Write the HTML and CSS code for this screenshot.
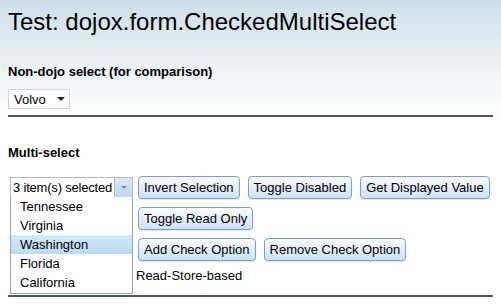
FILE: index.html
```html
<html><head>
<meta charset="UTF-8">
<title>Test: dojox.form.CheckedMultiSelect</title>
<link rel="stylesheet" href="styles.css">
</head>
<body>
  <h1>Test: dojox.form.CheckedMultiSelect</h1>

  <h2>Non-dojo select (for comparison)</h2>
  <div class="native-select">
    <span>Volvo</span>
    <span class="native-arrow"></span>
  </div>
  <hr>

  <h2 class="multi-title">Multi-select</h2>
  <div class="multi-row">
    <div class="multi-select">
      <div class="multi-box">
        <span class="multi-label">3 item(s) selected</span>
        <span class="multi-arrow"><span class="arrow-tri"></span></span>
      </div>
      <!-- open popup list lies over the page -->
      <ul class="multi-menu">
        <li>Tennessee</li>
        <li>Virginia</li>
        <li class="hover">Washington</li>
        <li>Florida</li>
        <li>California</li>
      </ul>
    </div>
    <div class="actions">
      <div class="btn-row">
        <button class="btn">Invert Selection</button>
        <button class="btn">Toggle Disabled</button>
        <button class="btn">Get Displayed Value</button>
      </div>
      <div class="btn-row">
        <button class="btn">Toggle Read Only</button>
      </div>
      <div class="btn-row">
        <button class="btn">Add Check Option</button>
        <button class="btn">Remove Check Option</button>
      </div>
      <div class="store-note">Read-Store-based</div>
    </div>
  </div>
  <hr class="bottom-rule">
</body></html>
```
FILE: styles.css
```css
body {
  font-family: 'Liberation Sans', Arial, sans-serif;
  font-size: 13px;
  margin: 8px;
  color: #131313;
  background: #fff linear-gradient(#cfdfea, #fff 115px) no-repeat;
}
h1 {
  margin: 0;
  font-size: 24px;
  font-weight: normal;
  line-height: 28px;
  color: #000;
}
h2 {
  margin: 28px 0 9px;
  font-size: 13px;
  line-height: 16px;
  color: #000;
}
.multi-title {
  margin-bottom: 15px;
}
.native-select {
  display: inline-flex;
  align-items: center;
  height: 18px;
  width: 51px;
  padding: 0 4px 0 5px;
  border: 1px solid #d6d6d6;
  background-color: #fff;
  justify-content: space-between;
  color: #000;
}
.native-arrow {
  width: 0;
  height: 0;
  border-left: 4px solid transparent;
  border-right: 4px solid transparent;
  border-top: 4px solid #222;
}
hr {
  margin: 6px 0 0;
  border: none;
  border-top: 2px solid #555;
  height: 0;
}
.bottom-rule {
  margin-top: 10px;
}
.multi-row {
  display: flex;
  align-items: flex-start;
  white-space: nowrap;
}
.multi-select {
  position: relative;
  flex-shrink: 0;
  margin: 1px 5px 0 2px;
}
.multi-box {
  display: flex;
  width: 121px;
  height: 19px;
  border: 1px solid #b5bcc7;
  background-color: #fff;
}
.multi-label {
  flex-grow: 1;
  padding-left: 2px;
  line-height: 19px;
  letter-spacing: -0.2px;
  color: #000;
}
.multi-arrow {
  width: 17px;
  display: flex;
  align-items: center;
  justify-content: center;
  border-left: 1px solid #b5bcc7;
  background: linear-gradient(#dbe9f7, #bed8f2);
}
.arrow-tri {
  width: 0;
  height: 0;
  border-left: 3px solid transparent;
  border-right: 3px solid transparent;
  border-top: 3px solid #7a8fa6;
}
.multi-menu {
  position: absolute;
  left: 0;
  top: 20px;
  width: 121px;
  margin: 0;
  padding: 0 0 1px;
  list-style-type: none;
  border: 1px solid #8ea5bd;
  border-top: none;
  background-color: #fff;
  z-index: 2;
}
.multi-menu li {
  padding-left: 9px;
  height: 19px;
  line-height: 19px;
  color: #000;
}
.multi-menu li.hover {
  background: linear-gradient(#d4e8fb, #bcdaf6);
}
.actions {
  display: flex;
  flex-direction: column;
  flex-shrink: 0;
  gap: 8px;
}
.btn-row {
  display: flex;
  gap: 8px;
}
.btn {
  font-family: 'Liberation Sans', Arial, sans-serif;
  font-size: 13px;
  line-height: 15px;
  height: 23px;
  padding: 3px 5px;
  white-space: nowrap;
  color: #000;
  border: 1px solid #7b9ec2;
  border-radius: 4px;
  background: linear-gradient(#fafcfe, #cde2f6);
  box-shadow: 0 1px 1px rgba(0,0,0,0.1);
}
.store-note {
  margin: -1px 0 0 -2px;
  height: 17px;
  color: #000;
}
```
